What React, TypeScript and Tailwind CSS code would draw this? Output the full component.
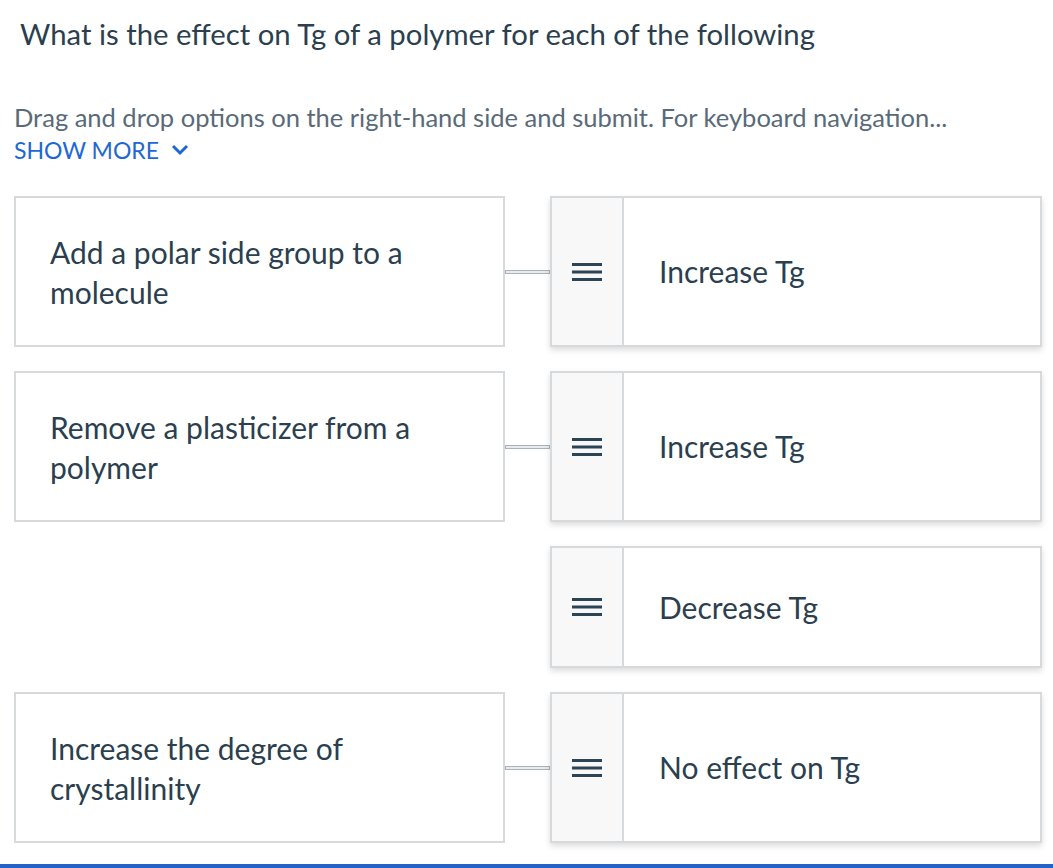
import React from "react";

type Row = { left?: string[]; right: string };

const rows: Row[] = [
  { left: ["Add a polar side group to a", "molecule"], right: "Increase Tg" },
  { left: ["Remove a plasticizer from a", "polymer"], right: "Increase Tg" },
  { right: "Decrease Tg" },
  { left: ["Increase the degree of", "crystallinity"], right: "No effect on Tg" },
];

const Handle = () => (
  <div className="w-[72px] shrink-0 bg-[#f8f8f8] border-r-2 border-[#d6dadd] flex items-center justify-center">
    <svg width="30" height="20" viewBox="0 0 30 20">
      <rect x="0" y="1" width="30" height="3" fill="#2b4456" />
      <rect x="0" y="8.5" width="30" height="3" fill="#2b4456" />
      <rect x="0" y="16" width="30" height="3" fill="#2b4456" />
    </svg>
  </div>
);

export default function App() {
  return (
    <div
      className="w-[1053px] h-[868px] bg-white relative overflow-hidden text-[#2b3f4f]"
      style={{ fontFamily: "Lato, 'Open Sans', sans-serif" }}
    >
      <h1 className="pl-[20px] pt-[16px] text-[29.3px] leading-[36px] text-[#2b3f4f]">
        What is the effect on Tg of a polymer for each of the following
      </h1>
      <p className="pl-[14px] mt-[50px] text-[25.5px] leading-[30px] text-[#596a78]">
        Drag and drop options on the right-hand side and submit. For keyboard navigation...
      </p>
      <button className="ml-[14px] mt-[3px] flex items-center gap-[12px] text-[23px] leading-[30px] text-[#1d68d6]">
        SHOW MORE
        <svg width="18" height="12" viewBox="0 0 18 12">
          <path d="M2 2 L9 9 L16 2" fill="none" stroke="#1d68d6" strokeWidth="3" />
        </svg>
      </button>
      <div className="mt-[31px] flex flex-col gap-[24px] pl-[14px]">
        {rows.map((r, i) => (
          <div key={i} className={`flex items-stretch ${r.left ? "h-[151px]" : "h-[122px]"}`}>
            {r.left ? (
              <div className="w-[491px] shrink-0 border-2 border-[#d6dadd] px-[34px] flex flex-col justify-center text-[30px] leading-[40px]">
                {r.left.map((l) => (
                  <div key={l}>{l}</div>
                ))}
              </div>
            ) : (
              <div className="w-[491px] shrink-0" />
            )}
            <div className="w-[45px] shrink-0 flex items-center">
              {r.left && <div className="w-full h-[4px] border border-[#a9b3bc] bg-[#e8ebee]" />}
            </div>
            <div className="w-[492px] shrink-0 flex border-2 border-[#d6dadd] bg-white shadow-[0_3px_6px_rgba(0,0,0,0.14)]">
              <Handle />
              <div className="flex items-center pl-[35px] text-[30px]">{r.right}</div>
            </div>
          </div>
        ))}
      </div>
      <div className="absolute left-0 right-0 bottom-0 h-[4px] bg-[#2262c9]" />
    </div>
  );
}
